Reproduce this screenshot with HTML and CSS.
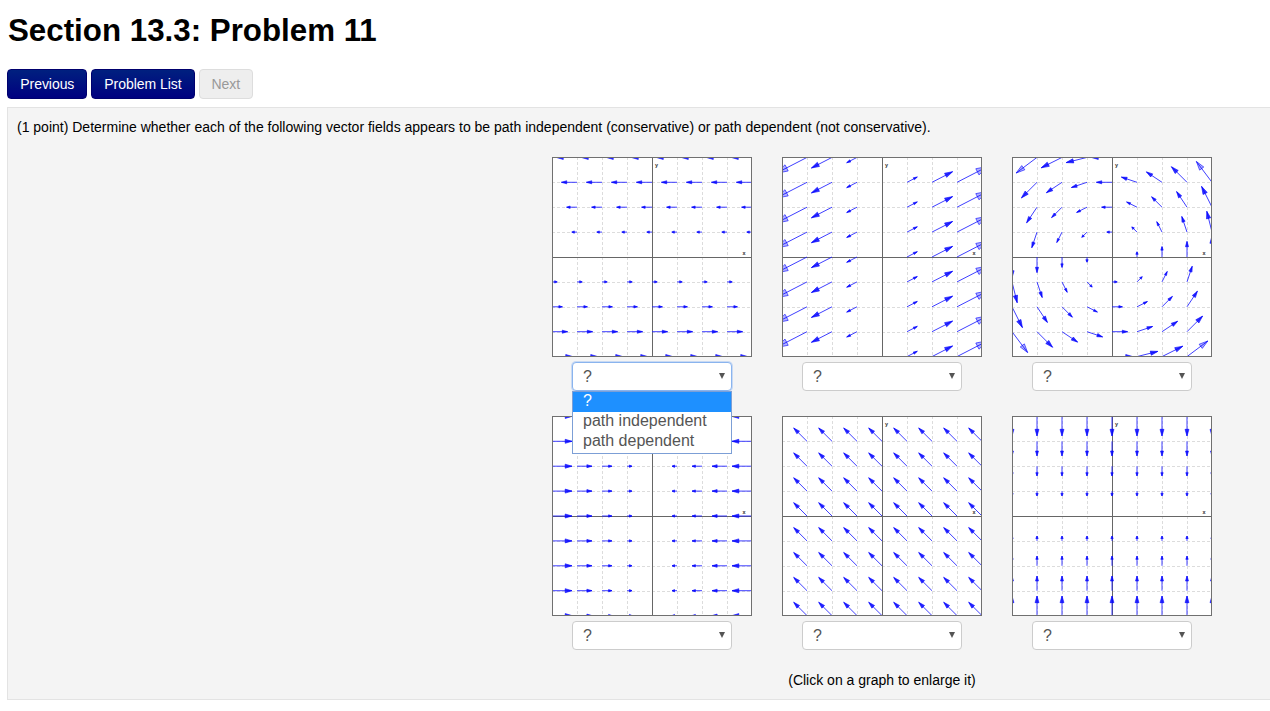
FILE: index.html
```html
<!DOCTYPE html>
<html lang="en">
<head>
<meta charset="utf-8">
<title>Section 13.3: Problem 11</title>
<link rel="stylesheet" href="styles.css">
</head>
<body>
<h1 class="title">Section 13.3: Problem 11</h1>
<nav class="nav">
  <a class="btn" href="#">Previous</a>
  <a class="btn" href="#">Problem List</a>
  <span class="btn btn-disabled">Next</span>
</nav>
<main class="problem">
  <p class="prompt">(1 point) Determine whether each of the following vector fields appears to be path independent (conservative) or path dependent (not conservative).</p>
  <div class="plots">
    <div class="cell">
      <svg class="plot" data-field="a" viewBox="0 0 200 200"></svg>
      <div class="pick pick-open">
        <div class="pick-box">?</div>
        <ul class="pick-list">
          <li class="pick-sel">?</li>
          <li>path independent</li>
          <li>path dependent</li>
        </ul>
      </div>
    </div>
    <div class="cell">
      <svg class="plot" data-field="b" viewBox="0 0 200 200"></svg>
      <div class="pick"><div class="pick-box">?</div></div>
    </div>
    <div class="cell">
      <svg class="plot" data-field="c" viewBox="0 0 200 200"></svg>
      <div class="pick"><div class="pick-box">?</div></div>
    </div>
    <div class="cell">
      <svg class="plot" data-field="d" viewBox="0 0 200 200"></svg>
      <div class="pick"><div class="pick-box">?</div></div>
    </div>
    <div class="cell">
      <svg class="plot" data-field="e" viewBox="0 0 200 200"></svg>
      <div class="pick"><div class="pick-box">?</div></div>
    </div>
    <div class="cell">
      <svg class="plot" data-field="f" viewBox="0 0 200 200"></svg>
      <div class="pick"><div class="pick-box">?</div></div>
    </div>
  </div>
  <p class="hint">(Click on a graph to enlarge it)</p>
</main>
<script src="plots.js"></script>
</body>
</html>
```
FILE: styles.css
```css
* { box-sizing: border-box; }
html, body { overflow: hidden; height: 100%; }
body {
  margin: 0;
  padding: 0 7px;
  background: #fff;
  color: #000;
  font-family: "Liberation Sans", Arial, sans-serif;
}
.title {
  margin: 0;
  padding: 13px 0 0 1px;
  height: 69px;
  font-size: 31.3px;
  line-height: 36px;
  font-weight: 700;
}
.nav { display: flex; gap: 4px; height: 30px; padding-left: .25px; }
.btn {
  display: flex;
  align-items: center;
  padding: 0 12px;
  border: 1px solid #00006e;
  border-radius: 4px;
  background: linear-gradient(#00207f, #000080);
  color: #fff;
  font-size: 14px;
  letter-spacing: -.05px;
  text-decoration: none;
}
.btn-disabled {
  border-color: #ddd;
  background: #eee;
  color: #999;
}
.problem {
  width: 1750px;
  height: 593px;
  margin-top: 8px;
  padding: 11px 9px 0;
  border: 1px solid #e3e3e3;
  background: #f4f4f4;
}
.prompt {
  margin: 0;
  font-size: 14px;
  line-height: 16px;
}
.plots {
  display: grid;
  grid-template-columns: repeat(3, 200px);
  column-gap: 30px;
  row-gap: 25px;
  justify-content: center;
  margin-top: 22px;
}
.cell { display: flex; flex-direction: column; align-items: center; gap: 5px; }
.plot { display: block; width: 200px; height: 200px; background: #fff; }
.pick { position: relative; width: 160px; }
.pick-box {
  position: relative;
  height: 29px;
  padding-left: 10px;
  border: 1px solid #ccc;
  border-radius: 4px;
  background: #fff;
  color: #555;
  font-size: 16px;
  line-height: 27px;
}
.pick-box::after {
  content: "";
  position: absolute;
  right: 6px;
  top: 10px;
  border-left: 3px solid transparent;
  border-right: 3px solid transparent;
  border-top: 6px solid #555;
}
.pick-open .pick-box {
  border-color: #8ab4ee;
  box-shadow: 0 0 0 1px rgba(120, 170, 240, .35);
}
.pick-list {
  position: absolute;
  z-index: 2;
  left: 0;
  top: 29px;
  width: 160px;
  height: 63px;
  margin: 0;
  padding: 0;
  list-style: none;
  border: 1px solid #7c9fd6;
  background: #fff;
  color: #555;
  font-size: 16px;
  line-height: 18px;
}
.pick-list li { height: 20px; padding-left: 10px; }
.pick-list .pick-sel { background: #1e90ff; color: #fff; }
.hint {
  margin: 21px 0 0;
  text-align: center;
  font-size: 14px;
  line-height: 18px;
}
.grid-line { stroke: #dcdcdc; stroke-width: 1; stroke-dasharray: 3 2; }
.axis { stroke: #666; stroke-width: 1; }
.frame { fill: none; stroke: #707070; stroke-width: 1; }
.shaft { stroke: #1c1cff; stroke-width: .85; }
.head { stroke: #0000ff; stroke-width: .6; fill: rgba(0, 0, 255, .3); }
.head-small { fill: rgba(0, 0, 255, .8); }
.lab { font-family: "Liberation Sans", Arial, sans-serif; font-size: 5.5px; font-weight: 700; fill: #333; }
```
FILE: plots.js
```js
var NS = 'http://www.w3.org/2000/svg';

// Each field returns the arrow in screen pixels for a lattice point (X right, Y up).
var FIELDS = {
  a: function (X, Y) { return [-5.2 * Y, 0]; },
  b: function (X, Y) { return [10.3 * X, -5.3 * X]; },
  c: function (X, Y) { return [-5.2 * Y, -5.2 * X]; },
  d: function (X, Y) { return [-5 * X, 0]; },
  e: function (X, Y) { return [-13.3, -13.3]; },
  f: function (X, Y) { return [0, 4.9 * Y]; }
};

function el(parent, name, attrs, text) {
  var node = document.createElementNS(NS, name);
  Object.keys(attrs).forEach(function (k) { node.setAttribute(k, attrs[k]); });
  if (text) node.textContent = text;
  parent.appendChild(node);
  return node;
}

function arrow(svg, x, y, dx, dy) {
  var len = Math.sqrt(dx * dx + dy * dy);
  if (len < 0.5) return;
  var ux = dx / len, uy = dy / len;
  var tipX = x + dx, tipY = y + dy;
  var back = Math.max(len * 0.34, 2.5), half = Math.max(len * 0.1, 1.2);
  var bx = tipX - ux * back, by = tipY - uy * back;
  el(svg, 'line', { 'class': 'shaft', x1: x, y1: y, x2: tipX, y2: tipY });
  var pts = [
    [tipX, tipY],
    [bx - uy * half, by + ux * half],
    [bx + uy * half, by - ux * half]
  ].map(function (p) { return p[0].toFixed(2) + ',' + p[1].toFixed(2); }).join(' ');
  el(svg, 'polygon', { 'class': len < 24 ? 'head head-small' : 'head', points: pts });
}

document.querySelectorAll('.plot').forEach(function (svg) {
  var field = FIELDS[svg.getAttribute('data-field')];
  var i;
  for (i = 25; i < 200; i += 25) {
    if (i === 100) continue;
    el(svg, 'line', { 'class': 'grid-line', x1: i + 0.5, y1: 0, x2: i + 0.5, y2: 200 });
    el(svg, 'line', { 'class': 'grid-line', x1: 0, y1: i + 0.5, x2: 200, y2: i + 0.5 });
  }
  el(svg, 'line', { 'class': 'axis', x1: 100.5, y1: 0, x2: 100.5, y2: 200 });
  el(svg, 'line', { 'class': 'axis', x1: 0, y1: 100.5, x2: 200, y2: 100.5 });
  for (var Y = 4; Y >= -4; Y--) {
    for (var X = -4; X <= 4; X++) {
      var v = field(X, Y);
      arrow(svg, 100 + X * 25, 100 - Y * 24.9, v[0], v[1]);
    }
  }
  el(svg, 'text', { 'class': 'lab', x: 103, y: 9.5 }, 'y');
  el(svg, 'text', { 'class': 'lab', x: 190.5, y: 98 }, 'x');
  el(svg, 'rect', { 'class': 'frame', x: 0.5, y: 0.5, width: 199, height: 199 });
});
```
